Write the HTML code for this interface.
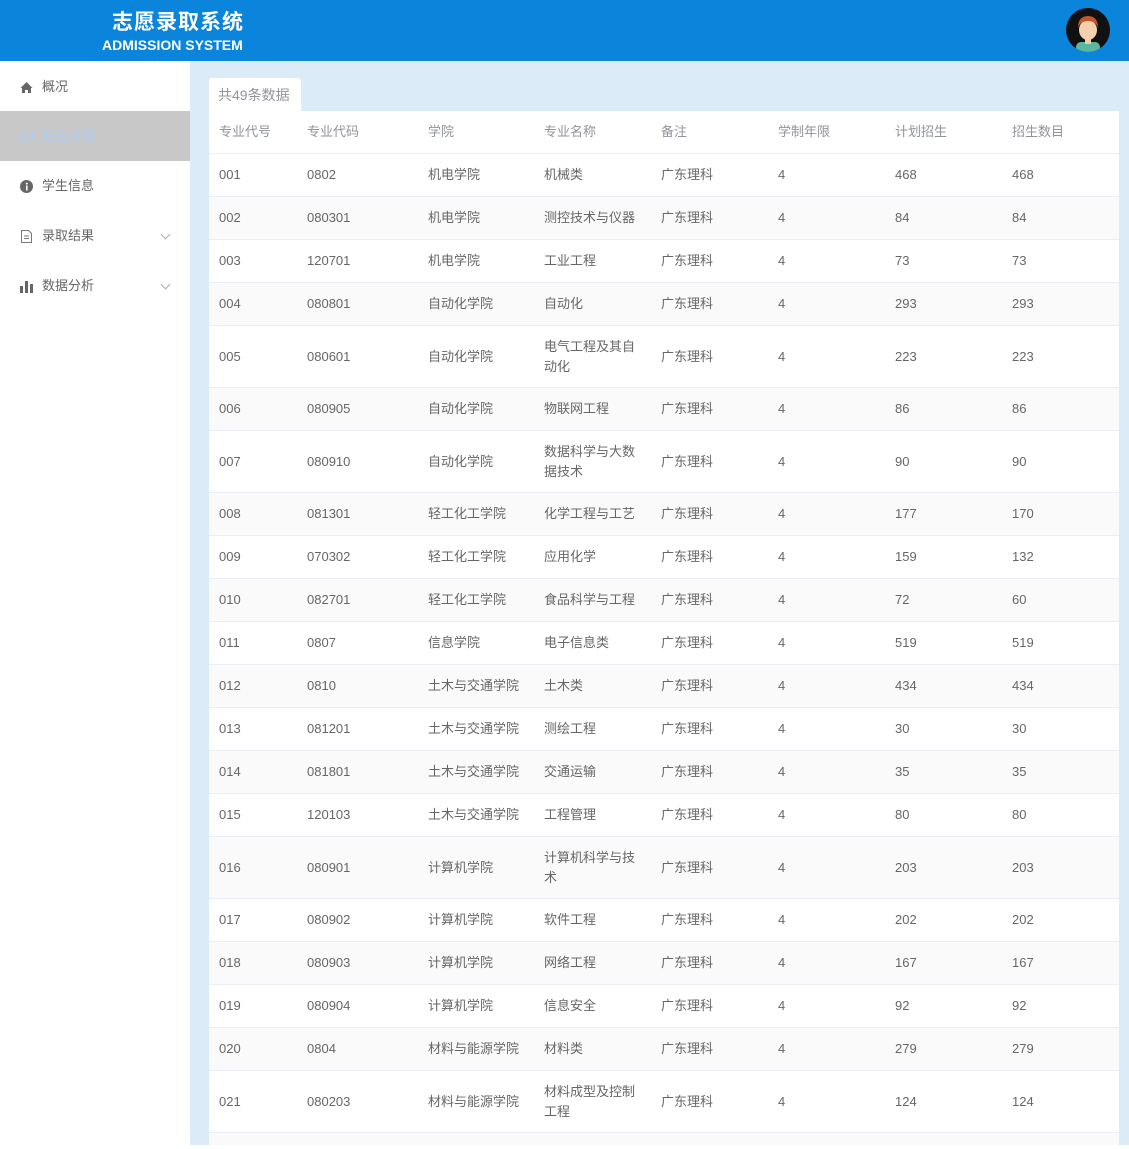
<!DOCTYPE html>
<html><head><meta charset="utf-8"><style>
*{margin:0;padding:0;box-sizing:border-box}
body{width:1129px;height:1149px;overflow:hidden;background:#fff;font-family:"Liberation Sans","Noto Sans CJK SC",sans-serif;font-size:13px;color:#666;position:relative}
.top{position:absolute;left:0;top:0;width:1129px;height:61px;background:#0b84dc}
.t1{position:absolute;left:112px;top:6px;color:#fff;font-size:21px;font-weight:bold;letter-spacing:1px}
.t2{position:absolute;left:102px;top:37px;color:#fff;font-size:14px;font-weight:bold}
.av{position:absolute;left:1066px;top:8px;width:44px;height:44px;border-radius:50%;background:#111;overflow:hidden}
.side{position:absolute;left:0;top:61px;width:190px;height:1088px;background:#fff}
.it{position:absolute;left:0;width:190px;height:50px;line-height:50px;padding-left:42px;color:#666;font-size:13px}
.it.act{background:#c8c8c8;color:#aecdf0}
.ic{position:absolute;left:20px;top:19px;width:13px;height:13px}
.chev{position:absolute;left:162px;top:20px;width:7px;height:7px;border-right:1px solid #aaa;border-bottom:1px solid #aaa;transform:rotate(45deg)}
.main{position:absolute;left:190px;top:61px;width:939px;height:1084px;background:#dbebf8;overflow:hidden}
.tab{position:absolute;left:19px;top:17px;width:92px;height:33px;background:#fff;border-radius:3px 3px 0 0;color:#909399;font-size:14px;line-height:35px;padding-left:9px}
table{position:absolute;left:19px;top:50px;width:910px;border-collapse:collapse;background:#fff;table-layout:fixed}
td,th{text-align:left;font-weight:normal;padding-left:10px;border-bottom:1px solid #ebeef5;height:43px;vertical-align:middle;line-height:20px;padding-top:1px}
th{color:#909399;height:42px}
tr.tall td{height:62px}
tbody tr:nth-child(even) td{background:#fafafa}
td.w{padding-right:14px}
</style></head><body>
<div class="top"><div class="t1">志愿录取系统</div><div class="t2">ADMISSION SYSTEM</div>
<div class="av"><svg width="44" height="44" viewBox="0 0 44 44"><rect x="10" y="34" width="24" height="12" rx="5" fill="#5bb8a0"/><rect x="19" y="30" width="6" height="6" fill="#f3c9a6"/><ellipse cx="22" cy="22" rx="9" ry="10" fill="#f5cfae"/><path d="M12 20 Q12 8 22 8 Q32 8 32 20 Q30 13 22 13 Q14 13 12 20Z" fill="#c2582b"/></svg></div></div>
<div class="side">
<div class="it" style="top:1px"><svg class="ic" viewBox="0 0 13 13"><path d="M6.5 1L0.5 7H2V12H5V9H8V12H11V7H12.5Z" fill="#666"/></svg>概况</div>
<div class="it act" style="top:50px"><svg class="ic" viewBox="0 0 13 13"><rect x="0.5" y="1.5" width="12" height="10" fill="none" stroke="#aecdf0"/><line x1="6.5" y1="1.5" x2="6.5" y2="11.5" stroke="#aecdf0"/></svg>招生计划</div>
<div class="it" style="top:100px"><svg class="ic" viewBox="0 0 13 13"><circle cx="6.5" cy="6.5" r="6.5" fill="#666"/><rect x="6" y="5.5" width="1.6" height="5" fill="#fff"/><circle cx="6.8" cy="3.6" r="1" fill="#fff"/></svg>学生信息</div>
<div class="it" style="top:150px"><svg class="ic" viewBox="0 0 13 13"><path d="M1.5 0.5H8.5L11.5 3.5V12.5H1.5Z" fill="none" stroke="#777"/><path d="M4 6H9M4 8.5H9" stroke="#777"/></svg>录取结果<span class="chev"></span></div>
<div class="it" style="top:200px"><svg class="ic" viewBox="0 0 13 13"><rect x="0" y="6" width="3" height="7" fill="#666"/><rect x="5" y="1" width="3" height="12" fill="#666"/><rect x="10" y="4" width="3" height="9" fill="#666"/></svg>数据分析<span class="chev"></span></div>
</div>
<div class="main"><div class="tab">共49条数据</div>
<table>
<colgroup><col style="width:88px"><col style="width:121px"><col style="width:116px"><col style="width:117px"><col style="width:117px"><col style="width:117px"><col style="width:117px"><col style="width:117px"></colgroup>
<thead><tr><th>专业代号</th><th>专业代码</th><th>学院</th><th>专业名称</th><th>备注</th><th>学制年限</th><th>计划招生</th><th>招生数目</th></tr></thead>
<tbody>
<tr><td>001</td><td>0802</td><td>机电学院</td><td class="w">机械类</td><td>广东理科</td><td>4</td><td>468</td><td>468</td></tr>
<tr><td>002</td><td>080301</td><td>机电学院</td><td class="w">测控技术与仪器</td><td>广东理科</td><td>4</td><td>84</td><td>84</td></tr>
<tr><td>003</td><td>120701</td><td>机电学院</td><td class="w">工业工程</td><td>广东理科</td><td>4</td><td>73</td><td>73</td></tr>
<tr><td>004</td><td>080801</td><td>自动化学院</td><td class="w">自动化</td><td>广东理科</td><td>4</td><td>293</td><td>293</td></tr>
<tr class="tall"><td>005</td><td>080601</td><td>自动化学院</td><td class="w">电气工程及其自动化</td><td>广东理科</td><td>4</td><td>223</td><td>223</td></tr>
<tr><td>006</td><td>080905</td><td>自动化学院</td><td class="w">物联网工程</td><td>广东理科</td><td>4</td><td>86</td><td>86</td></tr>
<tr class="tall"><td>007</td><td>080910</td><td>自动化学院</td><td class="w">数据科学与大数据技术</td><td>广东理科</td><td>4</td><td>90</td><td>90</td></tr>
<tr><td>008</td><td>081301</td><td>轻工化工学院</td><td class="w">化学工程与工艺</td><td>广东理科</td><td>4</td><td>177</td><td>170</td></tr>
<tr><td>009</td><td>070302</td><td>轻工化工学院</td><td class="w">应用化学</td><td>广东理科</td><td>4</td><td>159</td><td>132</td></tr>
<tr><td>010</td><td>082701</td><td>轻工化工学院</td><td class="w">食品科学与工程</td><td>广东理科</td><td>4</td><td>72</td><td>60</td></tr>
<tr><td>011</td><td>0807</td><td>信息学院</td><td class="w">电子信息类</td><td>广东理科</td><td>4</td><td>519</td><td>519</td></tr>
<tr><td>012</td><td>0810</td><td>土木与交通学院</td><td class="w">土木类</td><td>广东理科</td><td>4</td><td>434</td><td>434</td></tr>
<tr><td>013</td><td>081201</td><td>土木与交通学院</td><td class="w">测绘工程</td><td>广东理科</td><td>4</td><td>30</td><td>30</td></tr>
<tr><td>014</td><td>081801</td><td>土木与交通学院</td><td class="w">交通运输</td><td>广东理科</td><td>4</td><td>35</td><td>35</td></tr>
<tr><td>015</td><td>120103</td><td>土木与交通学院</td><td class="w">工程管理</td><td>广东理科</td><td>4</td><td>80</td><td>80</td></tr>
<tr class="tall"><td>016</td><td>080901</td><td>计算机学院</td><td class="w">计算机科学与技术</td><td>广东理科</td><td>4</td><td>203</td><td>203</td></tr>
<tr><td>017</td><td>080902</td><td>计算机学院</td><td class="w">软件工程</td><td>广东理科</td><td>4</td><td>202</td><td>202</td></tr>
<tr><td>018</td><td>080903</td><td>计算机学院</td><td class="w">网络工程</td><td>广东理科</td><td>4</td><td>167</td><td>167</td></tr>
<tr><td>019</td><td>080904</td><td>计算机学院</td><td class="w">信息安全</td><td>广东理科</td><td>4</td><td>92</td><td>92</td></tr>
<tr><td>020</td><td>0804</td><td>材料与能源学院</td><td class="w">材料类</td><td>广东理科</td><td>4</td><td>279</td><td>279</td></tr>
<tr class="tall"><td>021</td><td>080203</td><td>材料与能源学院</td><td class="w">材料成型及控制工程</td><td>广东理科</td><td>4</td><td>124</td><td>124</td></tr>
<tr><td>022</td><td>080501</td><td>材料与能源学院</td><td class="w">能源与动力工程</td><td>广东理科</td><td>4</td><td>100</td><td>100</td></tr>
</tbody></table></div>
</body></html>
